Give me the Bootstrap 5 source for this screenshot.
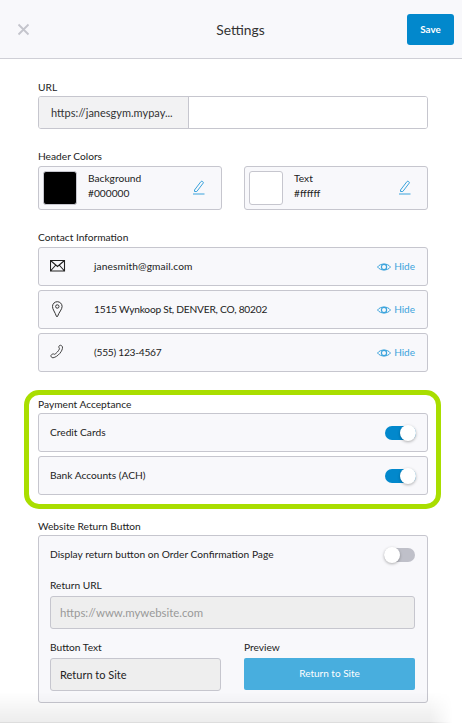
<!DOCTYPE html>
<html lang="en"><head><meta charset="utf-8"><title>Settings</title>
<link rel="stylesheet" href="https://cdn.jsdelivr.net/npm/bootstrap@5.3.0/dist/css/bootstrap.min.css">
<style>
html,body{height:724px;overflow:hidden;}
body{font-family:"Lato","Liberation Sans",sans-serif;font-size:10.2px;color:#222;background:#fff;position:relative;}
.top-bar{height:59px;background:#f8f8fb;border-bottom:1px solid #cfcfd6;padding:14px 8px 0 17px;}
.close-x{width:13px;height:13px;margin-top:9px;}
.page-title{font-size:13.8px;color:#333;line-height:31px;}
.title-wrap{flex:1;text-align:center;padding-left:44px;}
.save-btn{width:47px;height:31px;background:#0288cc;color:#fff;border:0;border-radius:3px;font-size:9.8px;font-weight:700;padding:0;}
.content{padding:22px 34px 0 38px;}
.field-label{line-height:12px;height:12px;margin-bottom:4px;display:block;}
.label-tight{margin-bottom:3px;}
.label-loose{margin-bottom:5px;}
.gap-top-21{margin-top:21px;}
.gap-top-11{margin-top:11px;}
.gap-top-16{margin-top:16px;}
.gap-top-12{margin-top:12px;}
.url-box{height:33px;border:1px solid #c6c6ce;border-radius:3px;overflow:hidden;margin-bottom:21px;}
.url-addon{width:150px;background:#f2f2f3;border-right:1px solid #c6c6ce;padding-left:12px;line-height:31px;font-size:11px;color:#333;white-space:nowrap;}
.color-card{width:184px;height:44px;background:#f8f8fb;border:1px solid #c6c6ce;border-radius:3px;padding:4px;}
.swatch{width:34px;height:34px;border-radius:3px;border:1px solid #c6c6ce;background:#fff;margin-right:11px;}
.swatch.dark{background:#000;}
.color-text{line-height:15px;flex:1;margin-top:-4px;}
.pen{width:12px;height:15px;margin-right:12px;margin-top:-2px;}
.panel-row{height:39px;background:#f8f8fb;border:1px solid #c6c6ce;border-radius:3px;margin-bottom:4px;padding:0 11px 0 11px;}
.ic{width:22px;height:16px;margin-right:22px;margin-top:-1px;}
.row-text{flex:1;}
.ls-email{letter-spacing:.1px;}
.ls-addr{letter-spacing:-.22px;}
.ls-phone{letter-spacing:-.25px;}
.hide-link{color:#3aa3dc;display:flex;align-items:center;gap:3px;font-size:10px;margin-right:1px;}
.hide-link svg{width:14px;height:10px;}
.green-zone{border:5px solid #a9de00;border-radius:15px;margin:18px -13px 0 -14px;padding:3px 8px 9px 9px;}
.green-zone .panel-row:last-child{margin-bottom:0;}
.sw{width:31px;height:16px;position:relative;border-radius:8px;}
.sw-track{height:14px;width:31px;border-radius:7px;background:#0288cc;margin-top:1px;}
.sw-knob{position:absolute;top:0;right:0;width:16px;height:16px;border-radius:50%;background:#fff;box-shadow:0 1px 3px rgba(0,0,0,.3);}
.sw.off .sw-track{background:#bfc0c9;}
.sw.off .sw-knob{left:0;right:auto;}
.return-card{height:168px;background:#f8f8fb;border:1px solid #c6c6ce;border-radius:3px;padding:11px 12px 0 11px;}
.disabled-box{background:#eee;border:1px solid #c6c6ce;border-radius:3px;height:33px;line-height:31px;padding-left:9px;font-size:11px;}
.muted-url{color:#999;font-size:11.4px;}
.btn-col{width:171px;}
.prev-col{width:171px;}
.preview-btn{height:32px;margin-top:1px;background:#48aede;color:#fff;border-radius:2px;text-align:center;line-height:31px;font-size:10px;}
.bottom-fade{position:absolute;left:0;right:0;top:692px;height:31px;background:linear-gradient(to bottom,rgba(0,0,0,0),rgba(0,0,0,.07));pointer-events:none;border-bottom:1px solid #ddd;-webkit-mask-image:linear-gradient(to right,#000 93%,transparent 98%);mask-image:linear-gradient(to right,#000 93%,transparent 98%);}
</style></head>
<body>
<header class="top-bar d-flex align-items-start">
  <svg class="close-x" viewBox="0 0 13 13"><path d="M1.5 1.500l10 10M11.500 1.500l-10 10" stroke="#c4c5cc" stroke-width="1.800" fill="none"/></svg>
  <div class="title-wrap"><span class="page-title">Settings</span></div>
  <button class="btn save-btn" type="button">Save</button>
</header>
<main class="content">
  <label class="field-label label-tight">URL</label>
  <div class="url-box d-flex"><div class="url-addon">https://janesgym.mypay...</div><div class="flex-grow-1 bg-white"></div></div>

  <label class="field-label">Header Colors</label>
  <div class="d-flex justify-content-between">
    <div class="color-card d-flex align-items-center"><div class="swatch dark"></div><div class="color-text">Background<br>#000000</div>
      <svg class="pen" viewBox="0 0 12 15"><path d="M1.500 10L8 1.500c.8-.8 2.800.3 2.300 1.500L3.800 11.500H1.500z" fill="none" stroke="#3aa3dc"/><path d="M0 14h11.500" stroke="#3aa3dc"/></svg></div>
    <div class="color-card d-flex align-items-center"><div class="swatch"></div><div class="color-text">Text<br>#ffffff</div>
      <svg class="pen" viewBox="0 0 12 15"><path d="M1.500 10L8 1.500c.8-.8 2.800.3 2.300 1.500L3.800 11.500H1.500z" fill="none" stroke="#3aa3dc"/><path d="M0 14h11.500" stroke="#3aa3dc"/></svg></div>
  </div>

  <label class="field-label gap-top-21">Contact Information</label>
  <div class="panel-row d-flex align-items-center">
    <svg class="ic" viewBox="0 0 22 16"><path d="M.5 2.500h14v10.500H.5zM.5 2.500l7 6 7-6M.5 13l5.300-6M14.500 13l-5.300-6" fill="none" stroke="#222" stroke-width="1.100"/></svg>
    <div class="row-text ls-email">janesmith@gmail.com</div>
    <div class="hide-link"><svg viewBox="0 0 14 10"><path d="M.5 5C3.500 1 10.500 1 13.500 5 10.500 9 3.500 9 .5 5z" fill="none" stroke="#3aa3dc"/><circle cx="7" cy="5" r="2.600" fill="none" stroke="#3aa3dc" stroke-width="1.200"/></svg>Hide</div>
  </div>
  <div class="panel-row d-flex align-items-center">
    <svg class="ic" viewBox="0 0 22 16"><path d="M6.500 15.500C5 11 2.500 8.500 2.500 5.500a4.800 4.800 0 0 1 9.600 0C12.100 8.500 9 11 7.500 15.500z" fill="none" stroke="#333"/><circle cx="7.300" cy="5.500" r="1.700" fill="none" stroke="#333"/></svg>
    <div class="row-text ls-addr">1515 Wynkoop St, DENVER, CO, 80202</div>
    <div class="hide-link"><svg viewBox="0 0 14 10"><path d="M.5 5C3.500 1 10.500 1 13.500 5 10.500 9 3.500 9 .5 5z" fill="none" stroke="#3aa3dc"/><circle cx="7" cy="5" r="2.600" fill="none" stroke="#3aa3dc" stroke-width="1.200"/></svg>Hide</div>
  </div>
  <div class="panel-row d-flex align-items-center">
    <svg class="ic" viewBox="0 0 22 16"><path d="M9.500 1.500c1-.8 2.500.3 3 1.300.5 4-4.500 10-9.500 11-1.500 0-2.500-1.500-2-2.500.8-1.300 2.500-1.800 3.500-1 1.500-.3 4.500-4 5-5.500-.8-1.200-1-2.600 0-3.300z" fill="none" stroke="#333" stroke-width=".9"/></svg>
    <div class="row-text ls-phone">(555) 123-4567</div>
    <div class="hide-link"><svg viewBox="0 0 14 10"><path d="M.5 5C3.500 1 10.500 1 13.500 5 10.500 9 3.500 9 .5 5z" fill="none" stroke="#3aa3dc"/><circle cx="7" cy="5" r="2.600" fill="none" stroke="#3aa3dc" stroke-width="1.200"/></svg>Hide</div>
  </div>

  <section class="green-zone">
    <label class="field-label label-tight">Payment Acceptance</label>
    <div class="panel-row d-flex align-items-center justify-content-between"><span>Credit Cards</span><div class="sw"><div class="sw-track"></div><div class="sw-knob"></div></div></div>
    <div class="panel-row d-flex align-items-center justify-content-between"><span>Bank Accounts (ACH)</span><div class="sw"><div class="sw-track"></div><div class="sw-knob"></div></div></div>
  </section>

  <label class="field-label label-tight gap-top-11">Website Return Button</label>
  <div class="return-card">
    <div class="d-flex justify-content-between align-items-center"><span>Display return button on Order Confirmation Page</span><div class="sw off"><div class="sw-track"></div><div class="sw-knob"></div></div></div>
    <label class="field-label label-loose gap-top-16">Return URL</label>
    <div class="disabled-box muted-url">https://www.mywebsite.com</div>
    <div class="d-flex justify-content-between gap-top-12">
      <div class="btn-col"><label class="field-label label-loose">Button Text</label><div class="disabled-box">Return to Site</div></div>
      <div class="prev-col"><label class="field-label label-loose">Preview</label><div class="preview-btn">Return to Site</div></div>
    </div>
  </div>
</main>
<div class="bottom-fade"></div>
</body></html>
